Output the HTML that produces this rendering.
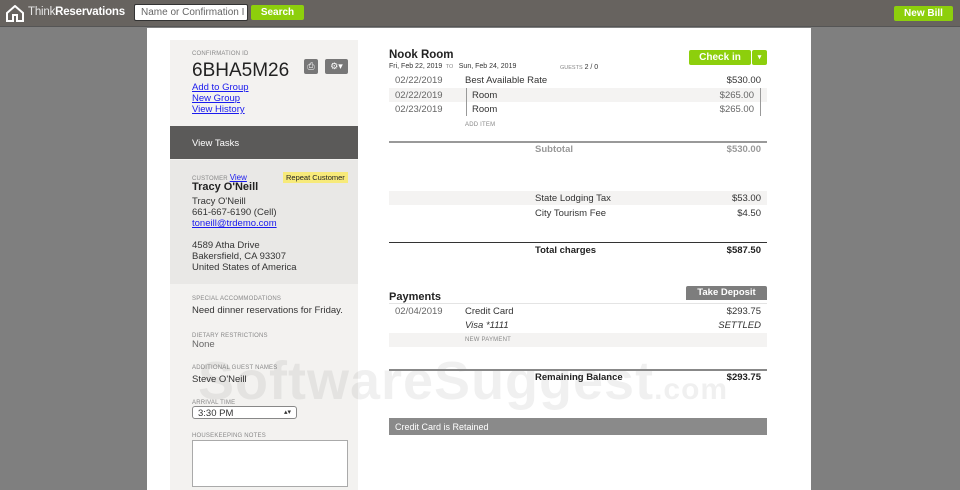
<!DOCTYPE html>
<html><head><meta charset="utf-8"><style>
*{margin:0;padding:0;box-sizing:border-box}
body{width:960px;height:490px;overflow:hidden;background:#7f7f7f;font-family:"Liberation Sans",Arial,sans-serif;position:relative;color:#222}
.a{position:absolute;white-space:nowrap}
.top{left:0;top:0;width:960px;height:27px;background:#67635f;border-bottom:1px solid #555}
.btn{background:#8dcf0c;color:#fff;font-weight:bold;font-size:10px;text-align:center;border-radius:2px}
.lbl{font-size:6px;color:#888;letter-spacing:.2px}
.t{font-size:9.5px;color:#333}
.g{color:#666}
a{color:#1a1aee;text-decoration:underline}
.r{text-align:right}
</style></head><body>
<div class="a top"></div>
<div class="a" style="left:6px;top:5px;width:18px;height:17px">
<svg width="18" height="17" viewBox="0 0 18 17"><path d="M1 8 L9 1 L17 8 V16 H11 V10 H7 V16 H1 Z" fill="none" stroke="#fff" stroke-width="2"/></svg></div>
<div class="a" style="left:28px;top:6px;font-size:11.5px;color:#e6e6e6;letter-spacing:-.2px">Think<b style="color:#fff">Reservations</b></div>
<div class="a" style="left:134px;top:4px;width:114px;height:17px;background:#fff;border:1px solid #333;border-radius:2px;font-size:10px;color:#666;padding:2px 6px;overflow:hidden">Name or Confirmation I</div>
<div class="a btn" style="left:251px;top:5px;width:53px;height:15px;line-height:15px">Search</div>
<div class="a btn" style="left:894px;top:6px;width:59px;height:15px;line-height:15px">New Bill</div>

<div class="a" style="left:147px;top:28px;width:664px;height:462px;background:#fff"></div>
<div class="a" style="left:170px;top:40px;width:188px;height:450px;background:#f3f2f0"></div>
<div class="a" style="left:170px;top:126px;width:188px;height:33px;background:#5b5a59"></div>
<div class="a" style="left:192px;top:138px;font-size:9.5px;color:#fff">View Tasks</div>
<div class="a" style="left:170px;top:160px;width:188px;height:124px;background:#e9e8e6"></div>

<div class="a lbl" style="left:192px;top:51px">CONFIRMATION ID</div>
<div class="a" style="left:192px;top:60px;font-size:19px;color:#222">6BHA5M26</div>
<div class="a" style="left:304px;top:59px;width:14px;height:15px;background:#777;border-radius:2px;color:#fff;font-size:9px;text-align:center;line-height:15px">⎙</div>
<div class="a" style="left:325px;top:59px;width:23px;height:15px;background:#777;border-radius:2px;color:#fff;font-size:9px;text-align:center;line-height:15px">⚙▾</div>
<div class="a t" style="left:192px;top:82px"><a>Add to Group</a></div>
<div class="a t" style="left:192px;top:93px"><a>New Group</a></div>
<div class="a t" style="left:192px;top:104px"><a>View History</a></div>

<div class="a" style="left:192px;top:171px;line-height:9px"><span class="lbl">CUSTOMER </span><a style="font-size:8px">View</a></div>
<div class="a" style="left:283px;top:172px;background:#f7ea7a;font-size:7.5px;padding:1px 3px">Repeat Customer</div>
<div class="a" style="left:192px;top:181px;font-size:11px;font-weight:bold">Tracy O'Neill</div>
<div class="a t" style="left:192px;top:196px">Tracy O'Neill</div>
<div class="a t" style="left:192px;top:207px">661-667-6190 (Cell)</div>
<div class="a t" style="left:192px;top:218px"><a>toneill@trdemo.com</a></div>
<div class="a t" style="left:192px;top:240px">4589 Atha Drive</div>
<div class="a t" style="left:192px;top:251px">Bakersfield, CA 93307</div>
<div class="a t" style="left:192px;top:262px">United States of America</div>

<div class="a lbl" style="left:192px;top:296px">SPECIAL ACCOMMODATIONS</div>
<div class="a t" style="left:192px;top:305px">Need dinner reservations for Friday.</div>
<div class="a lbl" style="left:192px;top:333px">DIETARY RESTRICTIONS</div>
<div class="a t g" style="left:192px;top:339px">None</div>
<div class="a lbl" style="left:192px;top:365px">ADDITIONAL GUEST NAMES</div>
<div class="a t" style="left:192px;top:374px">Steve O'Neill</div>
<div class="a lbl" style="left:192px;top:400px">ARRIVAL TIME</div>
<div class="a t" style="left:192px;top:406px;width:105px;height:13px;border:1px solid #888;border-radius:3px;background:#fff;padding:1px 5px">3:30 PM<span style="float:right;font-size:7px">▴▾</span></div>
<div class="a lbl" style="left:192px;top:433px">HOUSEKEEPING NOTES</div>
<div class="a" style="left:192px;top:440px;width:156px;height:47px;border:1px solid #aaa;background:#fff"></div>

<div class="a" style="left:198px;top:350px;font-size:54px;font-weight:bold;color:rgba(0,0,0,.06);letter-spacing:1px">SoftwareSuggest<span style="font-size:30px">.com</span></div>

<div class="a" style="left:389px;top:49px;font-size:11.5px;font-weight:bold">Nook Room</div>
<div class="a" style="left:389px;top:63px;font-size:7px;color:#333">Fri, Feb 22, 2019 <span style="font-size:5.5px;color:#888">&nbsp;TO&nbsp;</span> &nbsp;Sun, Feb 24, 2019</div>
<div class="a" style="left:560px;top:64px;font-size:7px;color:#333"><span style="font-size:5.5px;color:#888">GUESTS</span> 2 / 0</div>
<div class="a btn" style="left:689px;top:50px;width:62px;height:15px;line-height:15px">Check in</div>
<div class="a btn" style="left:752px;top:50px;width:15px;height:15px;line-height:15px;font-size:7px">▾</div>

<div class="a" style="left:389px;top:88px;width:378px;height:14px;background:#f4f3f2"></div>
<div class="a" style="left:466px;top:88px;width:1px;height:28px;background:#999"></div>
<div class="a" style="left:760px;top:88px;width:1px;height:28px;background:#999"></div>
<div class="a t g" style="left:395px;top:75px">02/22/2019</div>
<div class="a t" style="left:465px;top:75px">Best Available Rate</div>
<div class="a t r" style="left:680px;top:75px;width:81px">$530.00</div>
<div class="a t g" style="left:395px;top:90px">02/22/2019</div>
<div class="a t" style="left:472px;top:90px">Room</div>
<div class="a t r g" style="left:670px;top:90px;width:84px">$265.00</div>
<div class="a t g" style="left:395px;top:104px">02/23/2019</div>
<div class="a t" style="left:472px;top:104px">Room</div>
<div class="a t r g" style="left:670px;top:104px;width:84px">$265.00</div>
<div class="a lbl" style="left:465px;top:122px">ADD ITEM</div>
<div class="a" style="left:389px;top:141px;width:378px;height:2px;background:#999"></div>
<div class="a t" style="left:535px;top:144px;color:#999;font-weight:bold">Subtotal</div>
<div class="a t r" style="left:680px;top:144px;width:81px;color:#999;font-weight:bold">$530.00</div>

<div class="a" style="left:389px;top:191px;width:378px;height:14px;background:#f4f3f2"></div>
<div class="a t" style="left:535px;top:193px">State Lodging Tax</div>
<div class="a t r" style="left:680px;top:193px;width:81px">$53.00</div>
<div class="a t" style="left:535px;top:208px">City Tourism Fee</div>
<div class="a t r" style="left:680px;top:208px;width:81px">$4.50</div>
<div class="a" style="left:389px;top:242px;width:378px;height:1px;background:#333"></div>
<div class="a t" style="left:535px;top:245px;font-weight:bold;color:#222">Total charges</div>
<div class="a t r" style="left:680px;top:245px;width:81px;font-weight:bold;color:#222">$587.50</div>

<div class="a" style="left:389px;top:291px;font-size:11px;font-weight:bold">Payments</div>
<div class="a" style="left:686px;top:286px;width:81px;height:14px;background:#7d7d7d;color:#fff;font-weight:bold;font-size:9.5px;text-align:center;line-height:14px;border-radius:2px 2px 0 0">Take Deposit</div>
<div class="a" style="left:389px;top:303px;width:378px;height:1px;background:#e4e4e4"></div>
<div class="a t g" style="left:395px;top:306px">02/04/2019</div>
<div class="a t" style="left:465px;top:306px">Credit Card</div>
<div class="a t r" style="left:680px;top:306px;width:81px">$293.75</div>
<div class="a t" style="left:465px;top:320px;font-style:italic">Visa *1111</div>
<div class="a t r" style="left:680px;top:320px;width:81px;font-style:italic">SETTLED</div>
<div class="a" style="left:389px;top:333px;width:378px;height:14px;background:#f4f3f2"></div>
<div class="a lbl" style="left:465px;top:337px">NEW PAYMENT</div>
<div class="a" style="left:389px;top:369px;width:378px;height:2px;background:#888"></div>
<div class="a t" style="left:535px;top:372px;font-weight:bold;color:#222">Remaining Balance</div>
<div class="a t r" style="left:680px;top:372px;width:81px;font-weight:bold;color:#222">$293.75</div>
<div class="a" style="left:389px;top:418px;width:378px;height:17px;background:#8a8a8a;color:#fff;font-size:9px;padding:4px 6px">Credit Card is Retained</div>
</body></html>
